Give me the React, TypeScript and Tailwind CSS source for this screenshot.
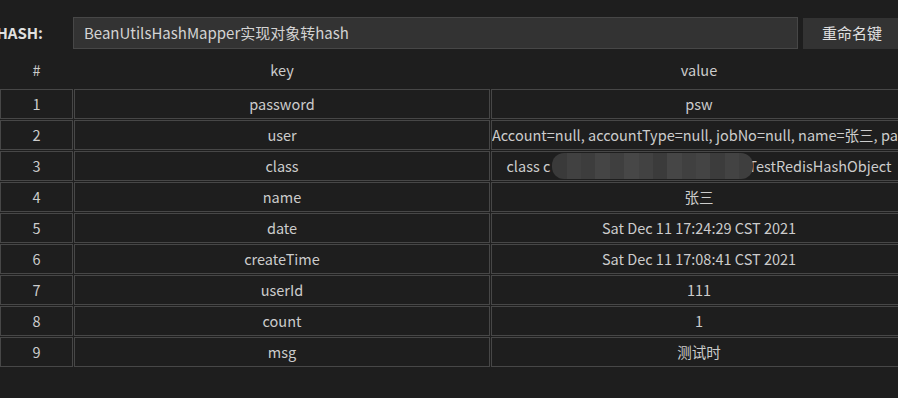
import React from "react";

const rows: { key: string; value: string }[] = [
  { key: "password", value: "psw" },
  { key: "user", value: "Account=null, accountType=null, jobNo=null, name=张三, password=psw, createTime=null" },
  { key: "class", value: "" },
  { key: "name", value: "张三" },
  { key: "date", value: "Sat Dec 11 17:24:29 CST 2021" },
  { key: "createTime", value: "Sat Dec 11 17:08:41 CST 2021" },
  { key: "userId", value: "111" },
  { key: "count", value: "1" },
  { key: "msg", value: "测试时" },
];

// mosaic used to hide the package name
const mosaic = ["#3a3a3a", "#414141", "#3d3d3d", "#454545", "#3f3f3f", "#474747", "#424242", "#3b3b3b", "#464646", "#404040", "#444444", "#3c3c3c", "#434343", "#3e3e3e"];

const Mosaic = () => (
  <span className="relative z-10 ml-[2px] -mr-[5px] inline-flex h-[26px] w-[201px] overflow-hidden rounded-[12px]">
    {mosaic.map((c, i) => (
      <span key={i} className="h-full flex-1" style={{ backgroundColor: c }} />
    ))}
  </span>
);

const cell = "flex h-[30px] items-center justify-center whitespace-nowrap overflow-hidden border border-[#474747]";

export default function App() {
  return (
    <div
      className="h-[398px] w-[898px] overflow-hidden bg-[#1e1e1e] text-[14.5px] text-[#cccccc]"
      style={{ fontFamily: '"Noto Sans CJK SC", "Noto Sans", sans-serif' }}
    >
      <div className="mt-[17px] flex h-[32px] items-center">
        <div className="flex w-[73px] shrink-0 justify-end pr-[30px] text-[15px] font-bold text-[#e0e0e0]">
          HASH:
        </div>
        <div className="flex h-[32px] w-[725px] shrink-0 items-center border border-[#474747] bg-[#333333] px-[10px] text-[15px] text-[#d4d4d4]">
          BeanUtilsHashMapper实现对象转hash
        </div>
        <button className="ml-[5px] flex h-[31px] w-[110px] shrink-0 items-center bg-[#333333] pl-[19px] text-[15px] text-[#e0e0e0]">
          重命名键
        </button>
      </div>

      <div className="grid grid-cols-[73px_416px_416px] gap-px">
        <div className="flex h-[39px] items-center justify-center pt-[3px]">#</div>
        <div className="flex h-[39px] items-center justify-center pt-[3px]">key</div>
        <div className="flex h-[39px] items-center justify-center pt-[3px]">value</div>

        {rows.map((r, i) => (
          <React.Fragment key={r.key}>
            <div className={cell}>{i + 1}</div>
            <div className={cell}>{r.key}</div>
            {r.key === "user" ? (
              <div className={`${cell} !justify-start`}>{r.value}</div>
            ) : r.key === "class" ? (
              <div className={cell}>
                <span>class c</span>
                <Mosaic />
                <span>TestRedisHashObject</span>
              </div>
            ) : (
              <div className={cell}>{r.value}</div>
            )}
          </React.Fragment>
        ))}
      </div>
    </div>
  );
}
